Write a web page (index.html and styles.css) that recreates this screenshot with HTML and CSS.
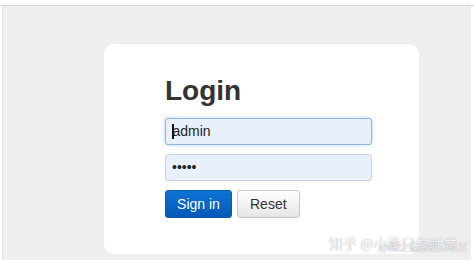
FILE: index.html
```html
<!DOCTYPE html>
<html>
<head>
<meta charset="utf-8">
<link rel="stylesheet" href="styles.css">
</head>
<body>
<div class="topbar"></div>
<div class="stage">
  <div class="card">
    <h1 class="title">Login</h1>
    <div class="field focused"><span class="caret"></span>admin</div>
    <div class="field">•••••</div>
    <div class="actions">
      <button class="btn primary">Sign in</button>
      <button class="btn">Reset</button>
    </div>
  </div>
  <div class="watermark">知乎 @小燕只想睡觉<span class="wm2">@稀土掘金技术社区</span></div>
</div>
</body>
</html>
```
FILE: styles.css
```css
html, body { margin: 0; padding: 0; }
body {
  width: 474px; height: 260px; overflow: hidden;
  background: #fff;
  font-family: "Liberation Sans", Arial, sans-serif;
}
.topbar { height: 5px; background: #fff; border-bottom: 1px solid #d9d9d9; }
.stage {
  position: relative;
  height: 254px;
  background: #efefef;
  border-left: 1px solid #e4e4e4;
  margin-left: 2px;
  margin-right: 3px;
  padding: 38px 0 0 101px;
  box-sizing: border-box;
}
.card {
  width: 315px; height: 210px;
  background: #fff;
  border-radius: 10px;
  box-sizing: border-box;
  padding: 31px 0 0 61px;
}
.title {
  margin: 0;
  font-size: 28px; font-weight: bold; color: #333;
  line-height: 32px; height: 43px;
}
.field {
  width: 207px; height: 27px; box-sizing: border-box;
  border: 1px solid #c9d3e3; border-radius: 3px;
  background: #e8f0fe;
  font-size: 14px; color: #222;
  padding: 0 6px; line-height: 25px;
  margin-bottom: 9px;
  display: flex; align-items: center;
}
.field.focused {
  border-color: #8db5de;
  box-shadow: 0 0 4px rgba(100, 160, 230, 0.45);
}
.caret { width: 1.5px; height: 15px; background: #111; margin-right: -1px; }
.actions { display: flex; gap: 5px; }
.btn {
  height: 28px; box-sizing: border-box;
  border-radius: 3px;
  font-family: "Liberation Sans", Arial, sans-serif;
  font-size: 14px; padding: 0 12px;
  white-space: nowrap;
  border: 1px solid #c8c8c8;
  background: linear-gradient(#ffffff, #e6e6e6);
  color: #333;
}
.btn.primary {
  width: 67px; padding: 0;
  border-color: #0a5bb0;
  background: linear-gradient(#0d73d4, #0559b8);
  color: #fff;
}
.watermark {
  position: absolute; left: 326px; top: 228px;
  font-family: "Noto Sans CJK SC", sans-serif;
  font-size: 14px; line-height: 18px; color: rgba(255,255,255,0.9);
  text-shadow: 0 0 1px rgba(110,110,110,0.7);
  white-space: nowrap;
}
.wm2 {
  position: absolute; left: 50px; top: 7px;
  font-size: 10px; line-height: 12px; color: rgba(255,255,255,0.85);
}
```
